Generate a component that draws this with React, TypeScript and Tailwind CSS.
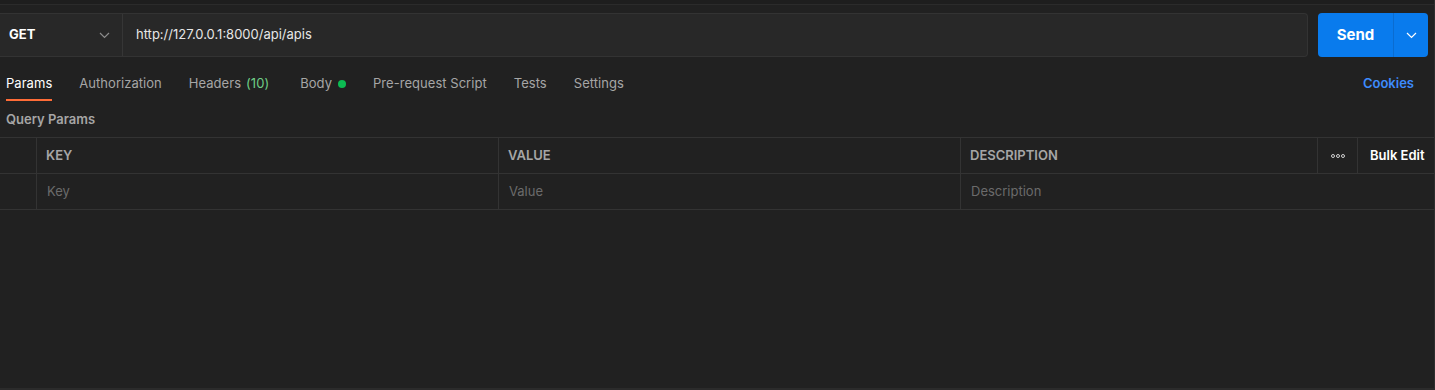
export default function App() {
  const tabs = [
    { label: "Params", active: true },
    { label: "Authorization" },
    { label: "Headers", count: "(10)" },
    { label: "Body", dot: true },
    { label: "Pre-request Script" },
    { label: "Tests" },
    { label: "Settings" },
  ];

  return (
    <div
      className="w-[1435px] h-[390px] bg-[#212121] flex flex-col overflow-hidden text-[13px] border-r border-[#2e2e2e]"
      style={{ fontFamily: "Inter, 'Noto Sans', sans-serif" }}
    >
      <div className="h-[5px] border-b border-[#2b2b2b] bg-[#1e1e1e]" />

      {/* request bar */}
      <div className="flex items-center mt-[8px] h-[44px] pr-[6px]">
        <div className="flex flex-1 h-full bg-[#282828] border border-l-0 border-[#333333] rounded-r-[4px]">
          <div className="w-[123px] flex items-center justify-between pl-[9px] pr-[12px] border-r border-[#363636]">
            <span className="font-bold text-white text-[13px]">GET</span>
            <svg width="11" height="7" viewBox="0 0 11 7" fill="none">
              <path d="M1 1l4.5 4.5L10 1" stroke="#8c8c8c" strokeWidth="1.2" />
            </svg>
          </div>
          <div className="flex items-center pl-[13px] text-[#e6e6e6] text-[13px]">
            http://127.0.0.1:8000/api/apis
          </div>
        </div>
        <div className="ml-[10px] w-[110px] h-full flex bg-[#097bed] rounded-[4px]">
          <div className="flex-1 flex items-center justify-center font-bold text-white text-[15px]">
            Send
          </div>
          <div className="w-[35px] flex items-center justify-center border-l border-[#0a6cd0]">
            <svg width="11" height="7" viewBox="0 0 11 7" fill="none">
              <path d="M1 1l4.5 4.5L10 1" stroke="#ffffff" strokeWidth="1.2" />
            </svg>
          </div>
        </div>
      </div>

      {/* tabs */}
      <div className="flex items-start mt-[18px] h-[27px] pl-[6px] pr-[20px]">
        <div className="flex gap-[27px] tracking-[0.04px]">
          {tabs.map((t) => (
            <div key={t.label} className={`flex flex-col ${t.count ? "mr-[4px]" : ""}`}>
              <div
                className={`flex items-center gap-[6px] leading-[17px] ${
                  t.active ? "text-white" : "text-[#a6a6a6]"
                }`}
              >
                <span>{t.label}</span>
                {t.count && <span className="-ml-[1px] text-[#6fce86]">{t.count}</span>}
                {t.dot && <span className="w-[8px] h-[8px] rounded-full bg-[#0cbb52]" />}
              </div>
              {t.active && <div className="mt-[7px] h-[2px] bg-[#ff6c37]" />}
            </div>
          ))}
        </div>
        <div className="ml-auto text-[#3d8bfd] font-semibold leading-[17px]">Cookies</div>
      </div>

      <div className="pl-[6px] mt-[9px] text-[#a6a6a6] font-semibold leading-[17px]">Query Params</div>

      {/* table */}
      <div className="mt-[9px] border-t border-[#333333]">
        <div className="flex h-[36px] border-b border-[#333333] text-[13px] font-semibold text-[#a6a6a6]">
          <div className="w-[37px] border-r border-[#333333]" />
          <div className="w-[462px] border-r border-[#333333] flex items-center pl-[9px]">KEY</div>
          <div className="w-[462px] border-r border-[#333333] flex items-center pl-[9px]">VALUE</div>
          <div className="w-[357px] border-r border-[#333333] flex items-center pl-[9px]">DESCRIPTION</div>
          <div className="w-[40px] border-r border-[#333333] flex items-center justify-center gap-[1px]">
            {[0, 1, 2].map((i) => (
              <span key={i} className="w-[4px] h-[4px] rounded-full border border-[#d0d0d0]" />
            ))}
          </div>
          <div className="flex-1 flex items-center pl-[12px] text-white">Bulk Edit</div>
        </div>
        <div className="flex h-[36px] border-b border-[#333333] text-[13px] text-[#6b6b6b]">
          <div className="w-[37px] border-r border-[#333333]" />
          <div className="w-[462px] border-r border-[#333333] flex items-center pl-[10px]">Key</div>
          <div className="w-[462px] border-r border-[#333333] flex items-center pl-[10px]">Value</div>
          <div className="flex-1 flex items-center pl-[10px]">Description</div>
        </div>
      </div>

      <div className="flex-1" />
      <div className="h-[2px] bg-[#2b2b2b]" />
    </div>
  );
}
